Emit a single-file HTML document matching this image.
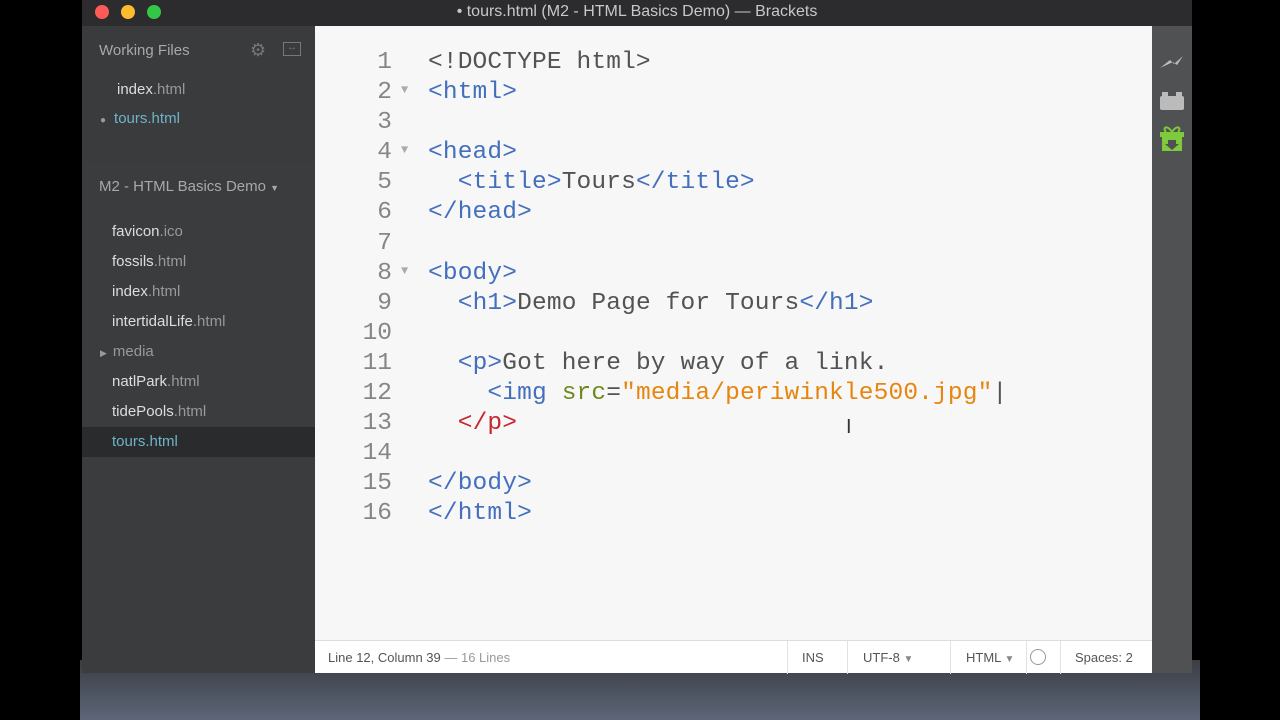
<!DOCTYPE html>
<html><head><style>
*{margin:0;padding:0;box-sizing:border-box}
body{width:1280px;height:720px;background:#000;position:relative;overflow:hidden;font-family:"Liberation Sans",sans-serif}
.bottom{position:absolute;left:80px;top:660px;width:1120px;height:60px;background:linear-gradient(#3a3d44,#5d6678)}
.win{position:absolute;left:82px;top:0;width:1110px;height:673px;background:#3b3c3e}
.title{position:absolute;left:0;top:0;width:1110px;height:26px;background:#2c2c2e;color:#c8c8c8;font-size:16px;text-align:center;line-height:23px}
.dot{position:absolute;top:5px;width:14px;height:14px;border-radius:50%}
.side{position:absolute;left:0;top:26px;width:233px;height:647px;background:#3b3c3e;color:#ddd;font-size:15px}
.side .wf{position:absolute;left:0;top:0;width:233px;height:137px;background:#3a3b3d}
.side div.t{position:absolute;white-space:nowrap}
.g{color:#999}
.editor{position:absolute;left:233px;top:26px;width:837px;height:614px;background:#f7f7f7;font-family:"Liberation Mono",monospace;font-size:24.5px}
.ln{position:absolute;left:0;width:77px;text-align:right;color:#868686}
.code{position:absolute;left:113px;white-space:pre;color:#535353;letter-spacing:0.15px}
.k{color:#446fbd}.r{color:#c5282f}.a{color:#6d8a1e}.s{color:#e6860e}
.fold{position:absolute;left:86px;color:#aaa;font-size:12px}
.status{position:absolute;left:233px;top:640px;width:837px;height:33px;background:#fff;border-top:1px solid #ddd;font-size:13px;color:#555}
.status .it{position:absolute;top:9px;white-space:nowrap}
.sep{position:absolute;top:0;width:1px;height:33px;background:#e2e2e2}
.tb{position:absolute;left:1070px;top:26px;width:40px;height:647px;background:#505153}
</style></head><body>
<div class="bottom"></div>
<div class="win">
<div class="title">• tours.html (M2 - HTML Basics Demo) — Brackets</div>
<div class="dot" style="left:13px;background:#fc5b57"></div>
<div class="dot" style="left:39px;background:#fdbc2e"></div>
<div class="dot" style="left:65px;background:#33c748"></div>
<div class="side">
<div class="wf"></div>
<div class="t g" style="left:17px;top:16px;font-size:15px;color:#a8a8a8">Working Files</div>
<div class="t" style="left:168px;top:14px;color:#777;font-size:18px">⚙</div>
<div class="t" style="left:201px;top:16px;width:18px;height:14px;border:1.5px solid #777;color:#777;font-size:10px;line-height:10px;text-align:center">↔</div>
<div class="t" style="left:35px;top:55px">index<span class="g">.html</span></div>
<div class="t" style="left:18px;top:84px;color:#6fb3c9"><span style="color:#999;font-size:10px;margin-right:8px">●</span>tours.html</div>
<div class="t" style="left:17px;top:152px;color:#a8a8a8">M2 - HTML Basics Demo <span style="font-size:9px">▼</span></div>
<div class="t" style="left:30px;top:197px">favicon<span class="g">.ico</span></div>
<div class="t" style="left:30px;top:227px">fossils<span class="g">.html</span></div>
<div class="t" style="left:30px;top:257px">index<span class="g">.html</span></div>
<div class="t" style="left:30px;top:287px">intertidalLife<span class="g">.html</span></div>
<div class="t g" style="left:18px;top:317px"><span style="font-size:9px;margin-right:6px">▶</span>media</div>
<div class="t" style="left:30px;top:347px">natlPark<span class="g">.html</span></div>
<div class="t" style="left:30px;top:377px">tidePools<span class="g">.html</span></div>
<div style="position:absolute;left:0;top:401px;width:233px;height:30px;background:#2a2b2d"></div>
<div class="t" style="left:30px;top:407px;color:#6fb3c9">tours.html</div>
</div>
<div class="editor">
<div class="ln" style="top:22px;line-height:30.1px">1<br>2<br>3<br>4<br>5<br>6<br>7<br>8<br>9<br>10<br>11<br>12<br>13<br>14<br>15<br>16</div>
<div class="fold" style="top:57px">▼</div><div class="fold" style="top:117px">▼</div><div class="fold" style="top:238px">▼</div>
<div class="code" style="top:22px;line-height:30.1px">&lt;!DOCTYPE html&gt;
<span class="k">&lt;html&gt;</span>

<span class="k">&lt;head&gt;</span>
  <span class="k">&lt;title&gt;</span>Tours<span class="k">&lt;/title&gt;</span>
<span class="k">&lt;/head&gt;</span>

<span class="k">&lt;body&gt;</span>
  <span class="k">&lt;h1&gt;</span>Demo Page for Tours<span class="k">&lt;/h1&gt;</span>

  <span class="k">&lt;p&gt;</span>Got here by way of a link.
    <span class="k">&lt;img</span> <span class="a">src</span>=<span class="s">"media/periwinkle500.jpg"</span>|
  <span class="r">&lt;/p&gt;</span>

<span class="k">&lt;/body&gt;</span>
<span class="k">&lt;/html&gt;</span></div>
<div style="position:absolute;left:531px;top:390px;font-family:'Liberation Sans';font-size:20px;color:#333">I</div>
</div>
<div class="status">
<span class="it" style="left:13px">Line 12, Column 39 <span style="color:#999">— 16 Lines</span></span>
<div class="sep" style="left:472px"></div><span class="it" style="left:487px">INS</span>
<div class="sep" style="left:532px"></div><span class="it" style="left:548px">UTF-8 <span style="color:#888;font-size:10px">▼</span></span>
<div class="sep" style="left:635px"></div><span class="it" style="left:651px">HTML <span style="color:#888;font-size:10px">▼</span></span>
<div class="sep" style="left:711px"></div><div style="position:absolute;left:715px;top:8px;width:16px;height:16px;border:1px solid #999;border-radius:50%"></div>
<div class="sep" style="left:745px"></div><span class="it" style="left:760px">Spaces: 2</span>
</div>
<div class="tb">
<svg width="40" height="140" style="position:absolute;left:0;top:0"><path d="M8 42 L18 34 L22 38 L31 30 L25 39 L21 36 Z" fill="#bbb"/><rect x="8" y="70" width="24" height="14" rx="2" fill="#bbb"/><rect x="10" y="66" width="6" height="5" fill="#bbb"/><rect x="24" y="66" width="6" height="5" fill="#bbb"/><rect x="10" y="110" width="20" height="15" fill="#7fc93d"/><rect x="8" y="106" width="24" height="5" fill="#7fc93d"/><path d="M20 106 C15 98 10 102 14 106 M20 106 C25 98 30 102 26 106" stroke="#7fc93d" stroke-width="2" fill="none"/><path d="M16 114 H24 V118 H27 L20 124 L13 118 H16 Z" fill="#505153"/></svg>
</div>
</div>
</body></html>
